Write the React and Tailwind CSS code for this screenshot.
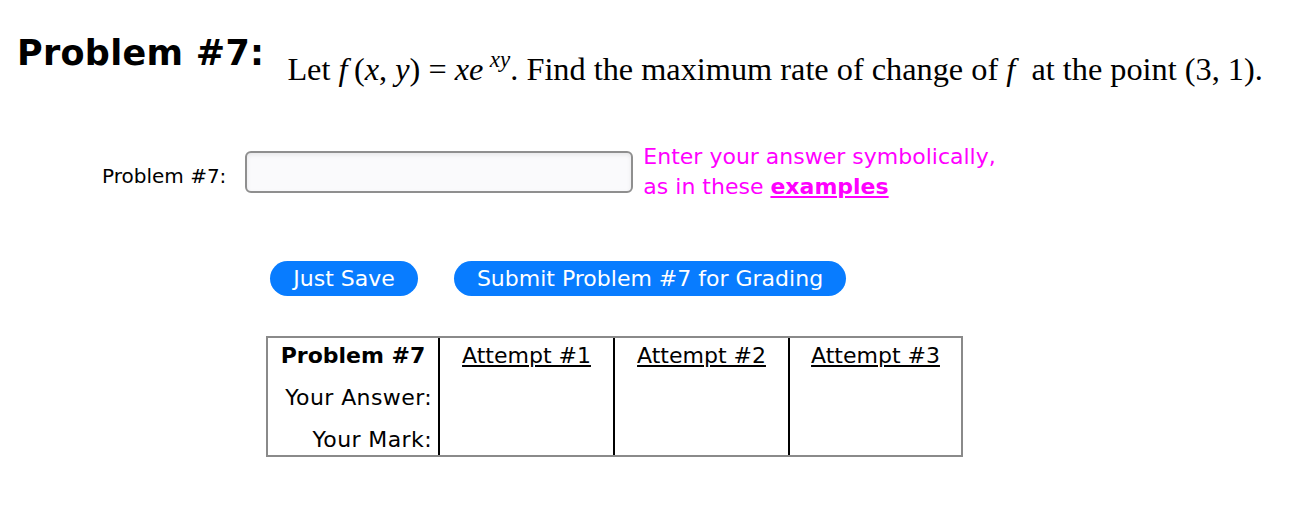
import React from "react";

const sans = { fontFamily: '"DejaVu Sans", Verdana, sans-serif' };

export default function App() {
  return (
    <div className="w-[1305px] h-[532px] bg-white text-black" style={sans}>
      <div className="flex items-start pl-[17px]">
        <div className="mt-[36px] text-[35px] leading-none font-bold tracking-[0.3px]">Problem #7:</div>
        <div
          className="ml-[23px] mt-[53px] text-[32.3px] leading-none whitespace-nowrap"
          style={{ fontFamily: '"Liberation Serif", "Times New Roman", serif' }}
        >
          Let <i>f</i>&thinsp;(<i>x</i>, <i>y</i>) = <i>xe</i>&thinsp;
          <span className="text-[23px] align-baseline relative -top-[13px]"><i>xy</i></span>. Find the maximum rate of change of <i>f</i>&nbsp; at the point (3, 1).
        </div>
      </div>

      <div className="flex items-center pl-[102px] mt-[57px]">
        <div className="text-[20px] leading-none mt-[8px]">Problem #7:</div>
        <input
          type="text"
          className="ml-[19px] w-[388px] h-[42px] rounded-[6px] border-2 border-[#8f8f8f] bg-[#fafafc] shadow-[inset_0_2px_4px_rgba(0,0,0,0.08)] outline-none"
        />
        <div className="ml-[10px] text-[22px] leading-[30px] text-[#ff00ff]">
          <div>Enter your answer symbolically,</div>
          <div>
            as in these <span className="font-bold underline">examples</span>
          </div>
        </div>
      </div>

      <div className="flex pl-[270px] mt-[59px] gap-[36px]">
        <button className="h-[35px] w-[148px] rounded-full bg-[#087cff] text-white text-[22px] leading-none">
          Just Save
        </button>
        <button className="h-[35px] w-[392px] rounded-full bg-[#087cff] text-white text-[22px] leading-none">
          Submit Problem #7 for Grading
        </button>
      </div>

      <div className="ml-[266px] mt-[40px] w-[697px] h-[121px] border-2 border-[#8a8a8a] grid grid-cols-[170px_175px_175px_173px] text-[22px]">
        <div className="grid grid-rows-[42px_42px_33px]">
          <div className="font-bold leading-[35px] text-center">Problem #7</div>
          <div className="leading-[35px] text-right pr-[6px] tracking-[0.4px]">Your Answer:</div>
          <div className="leading-[35px] text-right pr-[6px] tracking-[0.4px]">Your Mark:</div>
        </div>
        {["Attempt #1", "Attempt #2", "Attempt #3"].map((t) => (
          <div key={t} className="border-l-2 border-black text-center">
            <div className="leading-[35px] underline">{t}</div>
          </div>
        ))}
      </div>
    </div>
  );
}
